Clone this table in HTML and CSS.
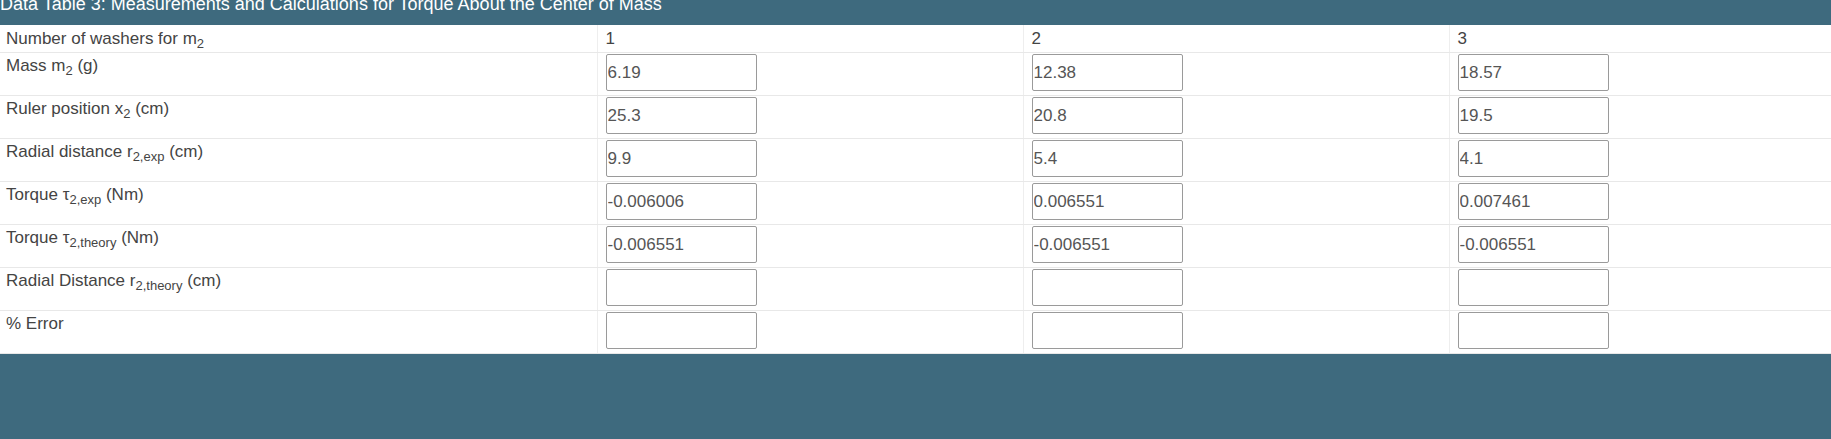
FILE: index.html
```html
<!DOCTYPE html>
<html lang="en">
<head>
<meta charset="utf-8">
<title>Data Table 3</title>
<link rel="stylesheet" href="styles.css">
</head>
<body>
<div class="title"><span>Data Table 3: Measurements and Calculations for Torque About the Center of Mass</span></div>
<table class="data">
  <colgroup>
    <col class="c-label">
    <col class="c-val">
    <col class="c-val">
    <col>
  </colgroup>
  <thead>
    <tr>
      <td class="label">Number of washers for m<sub>2</sub></td>
      <td>1</td>
      <td>2</td>
      <td>3</td>
    </tr>
  </thead>
  <tbody>
    <tr>
      <td class="label">Mass m<sub>2</sub> (g)</td>
      <td><input type="text" value="6.19"></td>
      <td><input type="text" value="12.38"></td>
      <td><input type="text" value="18.57"></td>
    </tr>
    <tr>
      <td class="label">Ruler position x<sub>2</sub> (cm)</td>
      <td><input type="text" value="25.3"></td>
      <td><input type="text" value="20.8"></td>
      <td><input type="text" value="19.5"></td>
    </tr>
    <tr>
      <td class="label">Radial distance r<sub>2,exp</sub> (cm)</td>
      <td><input type="text" value="9.9"></td>
      <td><input type="text" value="5.4"></td>
      <td><input type="text" value="4.1"></td>
    </tr>
    <tr>
      <td class="label">Torque τ<sub>2,exp</sub> (Nm)</td>
      <td><input type="text" value="-0.006006"></td>
      <td><input type="text" value="0.006551"></td>
      <td><input type="text" value="0.007461"></td>
    </tr>
    <tr>
      <td class="label">Torque τ<sub>2,theory</sub> (Nm)</td>
      <td><input type="text" value="-0.006551"></td>
      <td><input type="text" value="-0.006551"></td>
      <td><input type="text" value="-0.006551"></td>
    </tr>
    <tr>
      <td class="label">Radial Distance r<sub>2,theory</sub> (cm)</td>
      <td><input type="text" value=""></td>
      <td><input type="text" value=""></td>
      <td><input type="text" value=""></td>
    </tr>
    <tr>
      <td class="label">% Error</td>
      <td><input type="text" value=""></td>
      <td><input type="text" value=""></td>
      <td><input type="text" value=""></td>
    </tr>
  </tbody>
</table>
</body>
</html>
```

FILE: styles.css
```css
html, body {
  margin: 0;
  padding: 0;
}

body {
  background: #3e6a7e;
  font-family: "Liberation Sans", Arial, sans-serif;
}

.title {
  height: 25px;
  overflow: hidden;
  color: #ffffff;
  font-size: 18px;
}

.title span {
  display: block;
  line-height: 20px;
  margin-top: -6px;
  white-space: nowrap;
}

.data {
  width: 100%;
  border-collapse: collapse;
  table-layout: fixed;
  background: #ffffff;
  color: #444444;
  font-size: 17px;
}

.c-label {
  width: 597px;
}

.c-val {
  width: 426px;
}

.data td {
  padding: 1px 8px 4px 8px;
  vertical-align: top;
  line-height: 24px;
  border-bottom: 1px solid #e8e8e8;
  border-left: 1px solid #eeeeee;
}

.data thead td {
  padding: 2px 8px 1px 8px;
}

.data td.label {
  padding-left: 6px;
  border-left: none;
}

.data sub {
  font-size: 13px;
  line-height: 0;
  vertical-align: -4px;
}

.data input {
  display: block;
  box-sizing: border-box;
  width: 151px;
  height: 37px;
  margin: 0;
  padding: 0 1px;
  border: 1px solid #9a9a9a;
  border-radius: 2px;
  background: #ffffff;
  color: #555555;
  font-family: "Liberation Sans", Arial, sans-serif;
  font-size: 17px;
  outline: none;
}
```
